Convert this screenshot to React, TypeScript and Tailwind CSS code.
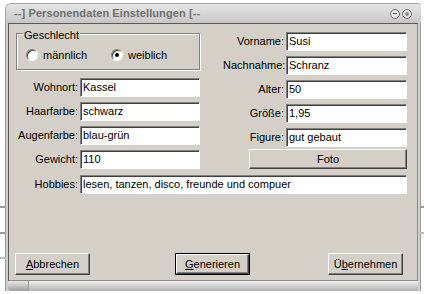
import React from 'react';

const font = { fontFamily: '"Liberation Sans", Arial, sans-serif' };

const Field: React.FC<{ label: string; value: string; labelW: string; inputW: string }> = ({ label, value, labelW, inputW }) => (
  <div className="flex items-center h-[19px]">
    <span className={`${labelW} text-right pr-[2px] text-[11px] text-black`}>{label}</span>
    <div
      className={`${inputW} h-[19px] bg-white border border-t-[#808080] border-l-[#808080] border-b-[#ffffff] border-r-[#ffffff] shadow-[inset_1px_1px_0_#404040,1px_1px_0_#d4d0c8] flex items-center pl-[2px] text-[11px] text-black`}
    >
      {value}
    </div>
  </div>
);

const Radio: React.FC<{ checked?: boolean; label: string }> = ({ checked, label }) => (
  <div className="flex items-center gap-[5px]">
    <span className="relative w-[12px] h-[12px] rounded-full bg-white border border-t-[#808080] border-l-[#808080] border-b-white border-r-white shadow-[inset_1px_1px_0_#404040] flex items-center justify-center">
      {checked && <span className="w-[4px] h-[4px] rounded-full bg-black" />}
    </span>
    <span className="text-[11px] text-black">{label}</span>
  </div>
);

const Button: React.FC<{ children: React.ReactNode; def?: boolean; className?: string }> = ({ children, def, className }) => (
  <div className={`${def ? 'border border-black' : ''} ${className ?? ''}`}>
    <div className="h-full w-full bg-[#d4d0c8] border border-t-white border-l-white border-b-[#404040] border-r-[#404040] shadow-[inset_-1px_-1px_0_#808080] flex items-center justify-center text-[11px] text-black">
      {children}
    </div>
  </div>
);

export default function App() {
  return (
    <div className="w-[424px] h-[294px] bg-white relative overflow-hidden" style={font}>
      {/* desktop remnants */}
      <div className="absolute left-0 top-[206px] w-[6px] h-[2px] bg-[#9a9a9a]" />
      <div className="absolute left-0 top-[232px] w-[6px] h-[2px] bg-[#9a9a9a]" />
      <div className="absolute left-0 top-[257px] w-[6px] h-[2px] bg-[#bdbdbd]" />
      <div className="absolute right-0 top-[206px] w-[4px] h-[2px] bg-[#9a9a9a]" />
      <div className="absolute right-0 top-[232px] w-[4px] h-[2px] bg-[#bdbdbd]" />

      <div className="ml-[5px] mt-[3px] w-[416px] h-[288px] flex flex-col">
        {/* title bar */}
        <div className="h-[20px] rounded-tl-[6px] rounded-tr-[3px] bg-gradient-to-b from-[#e6e6e6] via-[#d6d6d6] to-[#c6c6c6] border-t border-l border-[#a8a8a8] flex items-center pl-[8px] pr-[9px]">
          <span className="text-[11px] font-bold text-[#6f6f6f] tracking-[0.1px]">--] Personendaten Einstellungen [--</span>
          <div className="ml-auto flex gap-[2px]">
            <span className="w-[10px] h-[10px] rounded-full border border-[#707070] bg-[#e8e8e8] flex items-center justify-center">
              <span className="w-[4px] h-[1px] bg-[#606060]" />
            </span>
            <span className="w-[10px] h-[10px] rounded-full border border-[#707070] bg-[#e8e8e8] flex items-center justify-center">
              <span className="w-[4px] h-[4px] rounded-full bg-[#8a8a8a]" />
            </span>
          </div>
        </div>

        {/* frame + body */}
        <div className="flex-1 flex flex-col bg-[#cfcfcf] border-l border-r border-[#9a9a9a] px-[2px]">
          <div className="flex-1 flex flex-col bg-[#d4d0c8] border border-t-[#5a5a5a] border-l-[#5a5a5a] border-r-[#8a8a8a] border-b-[#8a8a8a] pl-[7px] pt-[8px] pb-[5px]">
            <div className="flex gap-[23px]">
              {/* left column */}
              <div className="flex flex-col w-[184px]">
                <div className="relative mt-[1px] h-[37px] border border-[#808080] shadow-[inset_1px_1px_0_#ffffff,1px_1px_0_#ffffff] flex items-end pb-[6px] pl-[9px] gap-[24px]">
                  <span className="absolute -top-[5px] left-[6px] px-[1px] bg-[#d4d0c8] text-[11px] text-black leading-[13px]">Geschlecht</span>
                  <Radio label="männlich" />
                  <Radio checked label="weiblich" />
                </div>
                <div className="flex flex-col gap-[5px] mt-[8px]">
                  <Field label="Wohnort:" value="Kassel" labelW="w-[64px]" inputW="w-[120px]" />
                  <Field label="Haarfarbe:" value="schwarz" labelW="w-[64px]" inputW="w-[120px]" />
                  <Field label="Augenfarbe:" value="blau-grün" labelW="w-[64px]" inputW="w-[120px]" />
                  <Field label="Gewicht:" value="110" labelW="w-[64px]" inputW="w-[120px]" />
                </div>
              </div>
              {/* right column */}
              <div className="flex flex-col gap-[5px] w-[184px]">
                <Field label="Vorname:" value="Susi" labelW="w-[63px]" inputW="w-[121px]" />
                <Field label="Nachnahme:" value="Schranz" labelW="w-[63px]" inputW="w-[121px]" />
                <Field label="Alter:" value="50" labelW="w-[63px]" inputW="w-[121px]" />
                <Field label="Größe:" value="1,95" labelW="w-[63px]" inputW="w-[121px]" />
                <Field label="Figure:" value="gut gebaut" labelW="w-[63px]" inputW="w-[121px]" />
                <Button className="ml-[26px] w-[158px] h-[20px] -mt-[3px]">Foto</Button>
              </div>
            </div>
            <div className="mt-[6px]">
              <Field label="Hobbies:" value="lesen, tanzen, disco, freunde und compuer" labelW="w-[64px]" inputW="w-[327px]" />
            </div>
            <div className="flex-1" />
            <div className="flex items-center pr-[14px]">
              <Button className="-ml-[1px] w-[75px] h-[22px]">
                <span><u>A</u>bbrechen</span>
              </Button>
              <Button def className="ml-[85px] w-[75px] h-[22px]">
                <span><u>G</u>enerieren</span>
              </Button>
              <Button className="ml-auto w-[75px] h-[22px]">
                <span>Ü<u>b</u>ernehmen</span>
              </Button>
            </div>
          </div>
          {/* bottom frame */}
          <div className="h-[10px] flex">
            <div className="w-[20px] bg-gradient-to-b from-[#e8e8e8] to-[#a0a0a0] rounded-bl-[4px]" />
            <div className="flex-1 bg-gradient-to-b from-[#f0f0f0] to-[#b0b0b0] border-l border-[#9a9a9a]" />
          </div>
        </div>
      </div>
    </div>
  );
}
